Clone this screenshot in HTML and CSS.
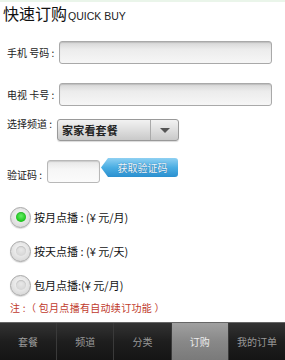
FILE: index.html
```html
<!DOCTYPE html>
<html lang="zh-CN">
<head>
<meta charset="utf-8">
<title>快速订购</title>
<link rel="stylesheet" href="styles.css">
</head>
<body>
<div class="page">
  <main class="main">
    <h1 class="title">快速订购<span class="title-en">QUICK BUY</span></h1>
    <div class="form">
      <div class="row row-text">
        <span class="label label-long">手机 号码 :</span>
        <span class="input input-wide"></span>
      </div>
      <div class="row row-text row-tv">
        <span class="label label-long">电视 卡号 :</span>
        <span class="input input-wide"></span>
      </div>
      <div class="row row-select">
        <span class="label label-select">选择频道 :</span>
        <span class="select">
          <span class="select-text">家家看套餐</span>
          <span class="select-arrow"><span class="tri"></span></span>
        </span>
      </div>
      <div class="row row-code">
        <span class="label label-code">验证码 :</span>
        <span class="input input-code"></span>
        <span class="code-btn">获取验证码</span>
      </div>
    </div>
    <div class="radios">
      <div class="radio-row"><span class="radio on"><span class="dot"></span></span><span class="radio-text">按月点播 : (¥ 元/月)</span></div>
      <div class="radio-row"><span class="radio"><span class="dot"></span></span><span class="radio-text">按天点播 : (¥ 元/天)</span></div>
      <div class="radio-row"><span class="radio"><span class="dot"></span></span><span class="radio-text">包月点播:(¥ 元/月)</span></div>
    </div>
    <p class="note">注 :（ 包月点播有自动续订功能 ）</p>
  </main>
  <nav class="tabs">
    <span class="tab">套餐</span>
    <span class="tab">频道</span>
    <span class="tab">分类</span>
    <span class="tab active">订购</span>
    <span class="tab">我的订单</span>
  </nav>
</div>
</body>
</html>
```
FILE: styles.css
```css
* { box-sizing: border-box; }
html, body { margin: 0; padding: 0; }
body {
  font-family: "Noto Sans CJK SC", "Noto Sans", sans-serif;
  background: #fff;
  color: #222;
}
.page {
  width: 285px;
  height: 360px;
  display: flex;
  flex-direction: column;
  overflow: hidden;
}
.main {
  flex: 1;
  border-top: 2px solid #eaf5ea;
}
.title {
  margin: 0;
  padding: 1px 0 0 3px;
  font-size: 16px;
  font-weight: normal;
  line-height: 20px;
  color: #111;
}
.title-en {
  font-family: "Liberation Sans", Arial, sans-serif;
  font-size: 10.5px;
  margin-left: 1px;
  color: #222;
}
.form {
  padding-left: 7px;
}
.row {
  display: flex;
  align-items: center;
}
.row-text { margin-top: 15px; }
.row-tv { margin-top: 19px; }
.row-select { margin-top: 13px; }
.row-code { margin-top: 19px; }
.label {
  font-size: 10px;
  line-height: 14px;
  color: #222;
  white-space: nowrap;
}
.label-long { width: 52px; }
.label-select { width: 50px; position: relative; top: -6px; }
.label-code { width: 40px; position: relative; top: 3px; }
.input {
  display: block;
  height: 23px;
  border: 1px solid #a9a9a9;
  border-radius: 3px;
  background: linear-gradient(#d6d6d6, #ececec 35%, #f6f6f6);
  box-shadow: inset 0 1px 1px rgba(0,0,0,0.12);
}
.input-wide { width: 213px; }
.input-code { width: 53px; height: 23px; border-color: #b8b8b8; background: linear-gradient(#e6e6e6, #f6f6f6 40%, #fbfbfb); }
.select {
  display: flex;
  width: 122px;
  height: 22px;
  border: 1px solid #999;
  border-radius: 3px;
  background: linear-gradient(#f2f2f2, #dedede 50%, #c9c9c9);
  box-shadow: 0 1px 1px rgba(0,0,0,0.15);
}
.select-text {
  flex: 1;
  font-size: 11px;
  line-height: 20px;
  padding-left: 4px;
  color: #222;
  font-weight: bold;
  letter-spacing: 0.2px;
}
.select-arrow {
  width: 28px;
  border-left: 1px solid #aaa;
  display: flex;
  align-items: center;
  justify-content: center;
}
.tri {
  width: 0;
  height: 0;
  border-left: 5px solid transparent;
  border-right: 5px solid transparent;
  border-top: 5px solid #555;
}
.code-btn {
  display: flex;
  align-items: center;
  justify-content: center;
  width: 77px;
  height: 19px;
  margin-left: 1px;
  position: relative;
  top: -4px;
  padding-left: 6px;
  font-size: 10px;
  color: #f2f8ff;
  text-shadow: 0 0 1px #1c5a8a;
  background: linear-gradient(#8fd0f2, #4aaee3 50%, #2a8fcf);
  border-radius: 0 3px 3px 0;
  clip-path: polygon(0 50%, 7px 0, 100% 0, 100% 100%, 7px 100%);
}
.radios {
  padding-left: 10px;
  margin-top: 24px;
  display: flex;
  flex-direction: column;
  gap: 14px;
}
.radio-row {
  display: flex;
  align-items: center;
  height: 20px;
}
.radio {
  width: 21px;
  height: 21px;
  border-radius: 50%;
  border: 1px solid #a8a8a8;
  background: radial-gradient(circle at 50% 40%, #fafafa, #dcdcdc 70%, #c4c4c4);
  display: flex;
  align-items: center;
  justify-content: center;
  box-shadow: 0 1px 1px rgba(0,0,0,0.15);
}
.dot {
  width: 10px;
  height: 10px;
  border-radius: 50%;
  background: radial-gradient(circle at 50% 40%, #e8e8e8, #cfcfcf);
  box-shadow: inset 0 1px 1px rgba(0,0,0,0.12);
}
.radio.on .dot {
  background: radial-gradient(circle at 50% 40%, #66ee66, #18c418 70%, #0a8a0a);
}
.radio-text {
  margin-left: 3px;
  font-size: 11px;
  color: #111;
}
.note {
  margin: 6px 0 0 10px;
  font-size: 10px;
  line-height: 14px;
  color: #c0392b;
  letter-spacing: 0.3px;
}
.tabs {
  display: flex;
  height: 38px;
  background: linear-gradient(#333, #1e1e1e 50%, #151515);
  border-top: 1px solid #666;
}
.tab {
  flex: 1;
  display: flex;
  align-items: center;
  justify-content: center;
  font-size: 10px;
  color: #999;
  border-right: 1px solid #3a3a3a;
}
.tab:last-child { border-right: none; }
.tab.active {
  background: linear-gradient(#a0a0a0, #888 50%, #7a7a7a);
  color: #eee;
}
```
